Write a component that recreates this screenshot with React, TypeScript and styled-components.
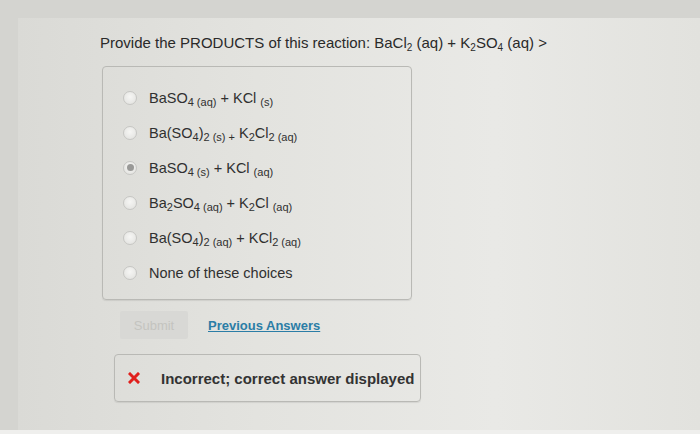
import React from "react";
import styled, { createGlobalStyle } from "styled-components";

const Global = createGlobalStyle`
  html, body {
    margin: 0;
    padding: 0;
    background: #d5d5d1;
  }
  body {
    font-family: "Liberation Sans", Arial, Helvetica, sans-serif;
    color: #333;
  }
`;

const Screen = styled.div`
  width: 700px;
  height: 434px;
  overflow: hidden;
  background: #d4d4d0;
  display: flex;
  flex-direction: column;
`;

const Sheet = styled.div`
  flex: 1;
  margin: 18px 0 0 18px;
  padding: 15px 0 0 82px;
  background: linear-gradient(90deg, #dadad6 0%, #e3e3df 35%, #e9e9e6 70%, #e2e2de 100%);
`;

const BottomEdge = styled.div`
  height: 4px;
  background: #efefed;
`;

const Title = styled.div`
  font-size: 15px;
  line-height: 20px;
  color: #2a2a2a;
`;

const Sub = styled.sub<{ $size?: number }>`
  font-size: ${(p) => p.$size ?? 11}px;
  vertical-align: -3px;
  line-height: 0;
`;

const ChoiceBox = styled.div`
  margin: 13px 0 0 2px;
  width: 310px;
  height: 234px;
  box-sizing: border-box;
  border: 1px solid #b9b9b5;
  border-radius: 4px;
  box-shadow: 0 1px 1px rgba(0, 0, 0, 0.08);
  padding: 13px 0 0 20px;
`;

const Row = styled.label`
  display: flex;
  align-items: center;
  height: 35px;
  gap: 12px;
  font-size: 14.5px;
  color: #303030;
`;

const Radio = styled.span<{ $checked?: boolean }>`
  width: 14px;
  height: 14px;
  border-radius: 50%;
  box-sizing: border-box;
  border: 1px solid #c6c6c3;
  background: radial-gradient(circle at 50% 40%, #f6f6f4 0%, #e0e0dd 100%);
  display: flex;
  align-items: center;
  justify-content: center;
  flex-shrink: 0;

  &::after {
    content: "";
    width: 7px;
    height: 7px;
    border-radius: 50%;
    background: ${(p) => (p.$checked ? "#999997" : "transparent")};
  }
`;

const Actions = styled.div`
  display: flex;
  align-items: center;
  gap: 20px;
  margin: 11px 0 0 20px;
`;

const SubmitButton = styled.button`
  width: 68px;
  height: 28px;
  border: none;
  border-radius: 2px;
  background: #d8d8d5;
  color: #c4c4c0;
  font-family: inherit;
  font-size: 13px;
  padding: 0;
`;

const PrevLink = styled.a`
  color: #2b7da6;
  font-weight: bold;
  font-size: 13px;
  text-decoration: underline;
  cursor: pointer;
`;

const Feedback = styled.div`
  margin: 15px 0 0 14px;
  width: 307px;
  height: 48px;
  box-sizing: border-box;
  border: 1px solid #b9b9b5;
  border-radius: 4px;
  box-shadow: 0 1px 1px rgba(0, 0, 0, 0.08);
  display: flex;
  align-items: center;
  padding-left: 13px;
  gap: 21px;
`;

const FeedbackText = styled.span`
  font-size: 15px;
  font-weight: bold;
  color: #333;
`;

const CrossIcon = () => (
  <svg width="12" height="12" viewBox="0 0 12 12">
    <path d="M2 2 L10 10 M10 2 L2 10" stroke="#e0201c" strokeWidth="3" strokeLinecap="square" />
  </svg>
);

const choices: { key: string; checked?: boolean; body: React.ReactNode }[] = [
  {
    key: "a",
    body: (
      <>
        BaSO<Sub>4 (aq)</Sub> + KCl <Sub>(s)</Sub>
      </>
    ),
  },
  {
    key: "b",
    body: (
      <>
        Ba(SO<Sub>4</Sub>)<Sub>2 (s) +</Sub> K<Sub>2</Sub>Cl<Sub>2 (aq)</Sub>
      </>
    ),
  },
  {
    key: "c",
    checked: true,
    body: (
      <>
        BaSO<Sub>4 (s)</Sub> + KCl <Sub>(aq)</Sub>
      </>
    ),
  },
  {
    key: "d",
    body: (
      <>
        Ba<Sub>2</Sub>SO<Sub>4 (aq)</Sub> + K<Sub>2</Sub>Cl <Sub>(aq)</Sub>
      </>
    ),
  },
  {
    key: "e",
    body: (
      <>
        Ba(SO<Sub>4</Sub>)<Sub>2 (aq)</Sub> + KCl<Sub>2 (aq)</Sub>
      </>
    ),
  },
  { key: "f", body: <>None of these choices</> },
];

export default function App() {
  return (
    <>
      <Global />
      <Screen>
        <Sheet>
          <Title>
            Provide the PRODUCTS of this reaction: BaCl<Sub $size={10}>2</Sub> (aq) + K
            <Sub $size={10}>2</Sub>SO<Sub $size={10}>4</Sub> (aq) &gt;
          </Title>
          <ChoiceBox>
            {choices.map((c) => (
              <Row key={c.key}>
                <Radio $checked={c.checked} />
                <span>{c.body}</span>
              </Row>
            ))}
          </ChoiceBox>
          <Actions>
            <SubmitButton disabled>Submit</SubmitButton>
            <PrevLink>Previous Answers</PrevLink>
          </Actions>
          <Feedback>
            <CrossIcon />
            <FeedbackText>Incorrect; correct answer displayed</FeedbackText>
          </Feedback>
        </Sheet>
        <BottomEdge />
      </Screen>
    </>
  );
}
